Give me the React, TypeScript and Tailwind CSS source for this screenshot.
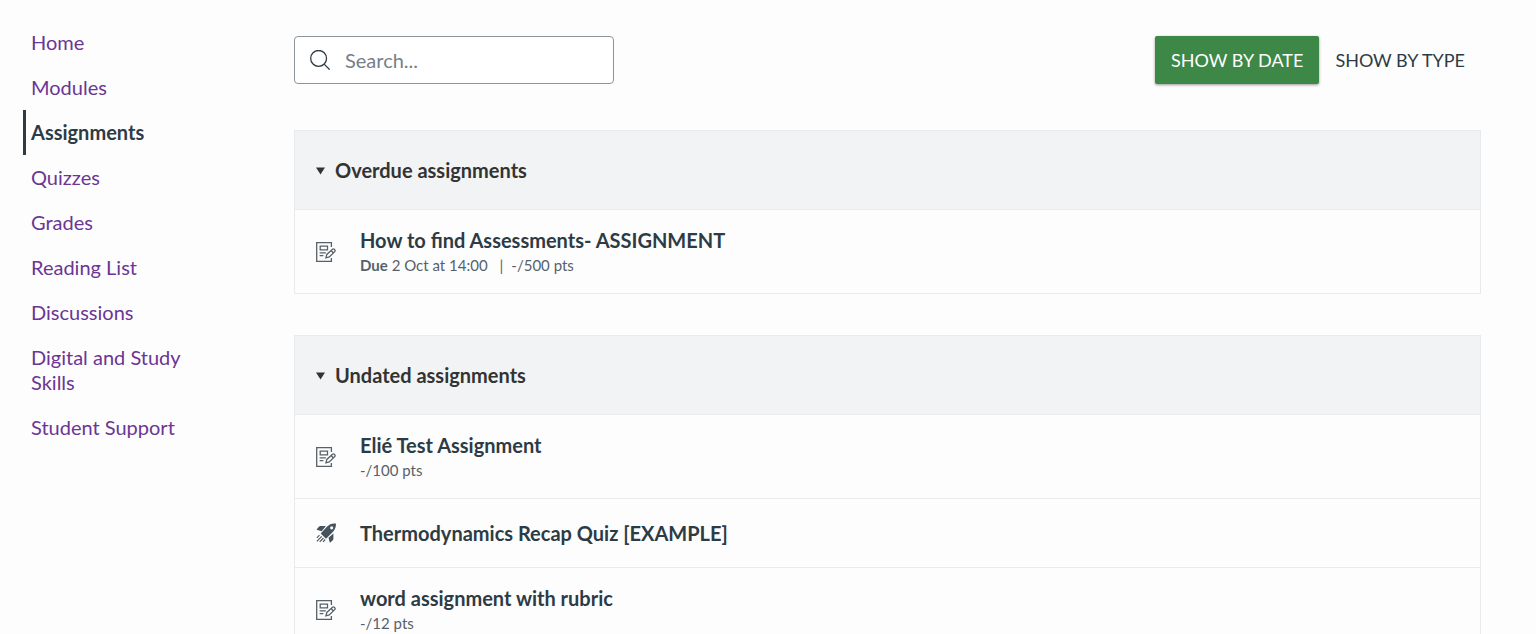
import { useState } from "react";

type Item = {
  title: string;
  icon: "assignment" | "quiz";
  due?: string;
  points?: string;
};

type Group = { title: string; items: Item[] };

const navItems = [
  "Home",
  "Modules",
  "Assignments",
  "Quizzes",
  "Grades",
  "Reading List",
  "Discussions",
  "Digital and Study Skills",
  "Student Support",
];

const groups: Group[] = [
  {
    title: "Overdue assignments",
    items: [
      {
        title: "How to find Assessments- ASSIGNMENT",
        icon: "assignment",
        due: "2 Oct at 14:00",
        points: "-/500 pts",
      },
    ],
  },
  {
    title: "Undated assignments",
    items: [
      { title: "Elié Test Assignment", icon: "assignment", points: "-/100 pts" },
      { title: "Thermodynamics Recap Quiz [EXAMPLE]", icon: "quiz" },
      {
        title: "word assignment with rubric",
        icon: "assignment",
        points: "-/12 pts",
      },
    ],
  },
];

const SearchIcon = () => (
  <svg
    className="size-5 shrink-0"
    viewBox="0 0 20 20"
    fill="none"
    stroke="#2d3b45"
    strokeWidth="1.3"
    aria-hidden="true"
  >
    <circle cx="8.6" cy="8.4" r="7.9" />
    <path d="M14.1 14.1 19.6 19.6" />
  </svg>
);

const AssignmentIcon = () => (
  <svg
    className="size-5 shrink-0"
    viewBox="0 0 20 20"
    fill="none"
    stroke="#56616a"
    strokeWidth="1.3"
    aria-hidden="true"
  >
    <path d="M15.4 5V.7H.7v18.6h14.7v-3.2" />
    <path d="M4.2 4.2h7.3v3.6H4.2z" />
    <path d="M3.6 10.9h6.2M3.6 13.7h3.8" />
    <path d="m9.9 15.9.9-3.5 5.7-5.2q.9-.7 1.8.1l.5.6q.7.9-.1 1.7l-5.4 5.4zM15.1 8.5l2.3 2.5" />
  </svg>
);

const QuizIcon = () => (
  <svg
    className="size-5 shrink-0"
    viewBox="0 0 20 20"
    fill="#46525c"
    aria-hidden="true"
  >
    <path
      fillRule="evenodd"
      d="M19.9.5c-3.5-.5-6.6.6-9 3.2l-6.2 6.8 5.3 5.2 6.3-6.2c2.6-2.6 3.9-5.6 3.6-9Zm-4.2 2.7a1.6 1.6 0 1 1 0 3.2 1.6 1.6 0 0 1 0-3.2Z"
    />
    <path d="M9.9 3H4.4Q3.5 3 2.9 3.7L1 6q-.5.9.4 1.1l4.3 1.2zM17.4 10.4v5.4q0 .9-.6 1.5l-2.2 2q-.8.5-1-.4l-1.1-4.2z" />
    <path
      d="M3.5 12 .9 14.8M5.7 13.3.9 18.3M7.5 15 3.7 18.9M9.2 16.5 7 18.8"
      stroke="#46525c"
      strokeWidth="1.1"
    />
  </svg>
);

const CourseNav = () => (
  <nav className="w-[178px] shrink-0 pt-5 text-xl leading-[25px]">
    <ul>
      {navItems.map((label) => (
        <li key={label}>
          <a
            href="#"
            aria-current={label === "Assignments" ? "page" : undefined}
            className={`block border-l-3 py-2.5 pl-[5px] ${
              label === "Assignments"
                ? "border-[#2d3b45] font-bold text-[#2d3b45]"
                : "border-transparent text-[#6b3594]"
            }`}
          >
            {label}
          </a>
        </li>
      ))}
    </ul>
  </nav>
);

const AssignmentRow = ({ item }: { item: Item }) => (
  <li className="flex items-center gap-6 border-t border-[#e8eaec] px-[21px] py-4">
    {item.icon === "quiz" ? <QuizIcon /> : <AssignmentIcon />}
    <div>
      <a
        href="#"
        className={`block text-xl font-bold text-[#2d3b45] ${
          item.points ? "leading-7" : "leading-9"
        }`}
      >
        {item.title}
      </a>
      {item.points && (
        <div className="text-[15px] leading-[23px] text-[#56616a]">
          {item.due && (
            <>
              <b>Due</b> {item.due}
              <span className="mr-2 ml-3">|</span>
            </>
          )}
          {item.points}
        </div>
      )}
    </div>
  </li>
);

const AssignmentGroup = ({ group }: { group: Group }) => {
  const [open, setOpen] = useState(true);

  return (
    <section className="border border-[#e8eaec]">
      <h2 className="bg-[#f2f3f4]">
        <button
          type="button"
          aria-expanded={open}
          onClick={() => setOpen(!open)}
          className="flex w-full items-center gap-2.5 px-[21px] py-[25px] text-xl font-bold text-[#333333]"
        >
          <svg
            className={`h-2.5 w-[9px] ${open ? "" : "-rotate-90"}`}
            viewBox="0 0 9 10"
            fill="currentColor"
            aria-hidden="true"
          >
            <path d="M0 2.5h9L4.5 9.5z" />
          </svg>
          {group.title}
        </button>
      </h2>
      {open && (
        <ul>
          {group.items.map((item) => (
            <AssignmentRow key={item.title} item={item} />
          ))}
        </ul>
      )}
    </section>
  );
};

export default function App() {
  const [search, setSearch] = useState("");
  const [view, setView] = useState("date");

  return (
    <div className="flex h-screen justify-between gap-[93px] overflow-y-auto bg-[#fdfdfd] pr-[55px] pl-[23px] font-['Lato',sans-serif]">
      <CourseNav />
      <main className="min-w-0 flex-1 pt-9">
        <div className="flex items-center justify-between">
          <label className="flex h-12 w-80 items-center gap-[15px] rounded-sm border border-[#8d959c] bg-white px-[15px]">
            <SearchIcon />
            <input
              type="text"
              aria-label="Search"
              placeholder="Search..."
              value={search}
              onChange={(e) => setSearch(e.target.value)}
              className="min-w-0 flex-1 text-xl text-[#2d3b45] outline-none placeholder:text-[#75808a]"
            />
          </label>
          <div className="flex text-lg">
            {["date", "type"].map((v) => (
              <button
                key={v}
                type="button"
                aria-pressed={view === v}
                onClick={() => setView(v)}
                className={`h-12 rounded-xs px-4 uppercase ${
                  view === v
                    ? "bg-[#3d8747] text-white shadow-[0_1px_3px_rgba(0,0,0,0.4)]"
                    : "text-[#2d3b45]"
                }`}
              >
                Show by {v}
              </button>
            ))}
          </div>
        </div>
        <div className="flex flex-col gap-[41px] pt-[46px] pb-10">
          {groups.map((group) => (
            <AssignmentGroup key={group.title} group={group} />
          ))}
        </div>
      </main>
    </div>
  );
}
